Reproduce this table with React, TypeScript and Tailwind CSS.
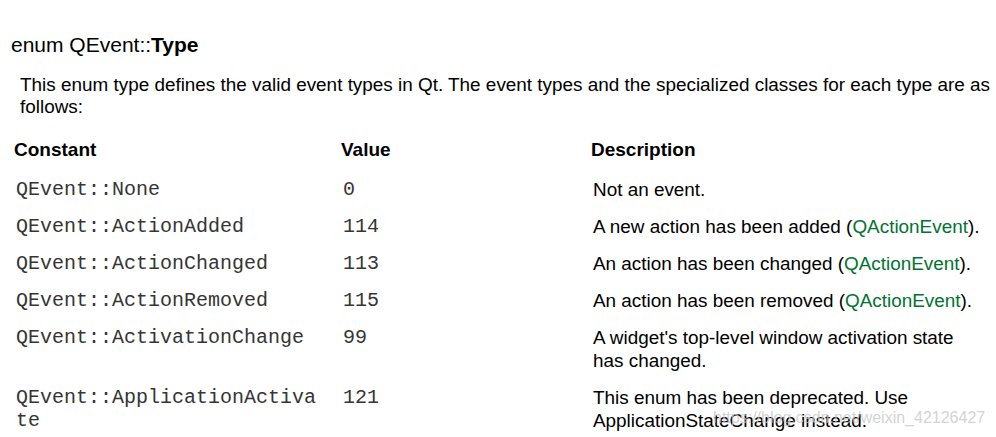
const rows: { name: string; value: string; desc: React.ReactNode }[] = [
  { name: "QEvent::None", value: "0", desc: "Not an event." },
  {
    name: "QEvent::ActionAdded",
    value: "114",
    desc: (
      <>
        A new action has been added (<Link>QActionEvent</Link>).
      </>
    ),
  },
  {
    name: "QEvent::ActionChanged",
    value: "113",
    desc: (
      <>
        An action has been changed (<Link>QActionEvent</Link>).
      </>
    ),
  },
  {
    name: "QEvent::ActionRemoved",
    value: "115",
    desc: (
      <>
        An action has been removed (<Link>QActionEvent</Link>).
      </>
    ),
  },
  {
    name: "QEvent::ActivationChange",
    value: "99",
    desc: "A widget's top-level window activation state has changed.",
  },
  {
    name: "QEvent::ApplicationActivate",
    value: "121",
    desc: "This enum has been deprecated. Use ApplicationStateChange instead.",
  },
];

function Link({ children }: { children: React.ReactNode }) {
  return <span className="text-[#00732f]">{children}</span>;
}

export default function App() {
  return (
    <div
      className="relative w-[996px] h-[437px] overflow-hidden bg-white text-black"
      style={{ fontFamily: "Arial, 'Liberation Sans', sans-serif" }}
    >
      <h3 className="pl-[11px] pt-[32px] text-[21px] leading-[26px] font-normal">
        enum QEvent::<b className="font-bold">Type</b>
      </h3>

      <p className="pl-[20px] mt-[16px] text-[18.9px] leading-[22px]">
        This enum type defines the valid event types in Qt. The event types and the specialized
        classes for each type are as follows:
      </p>

      {/* table */}
      <div className="mt-[20px] pl-[14px] grid grid-cols-[327px_250px_394px] text-[18.9px] leading-[23px]">
        <div className="font-bold text-[19px] pb-[10px]">Constant</div>
        <div className="font-bold text-[19px] pb-[10px]">Value</div>
        <div className="font-bold text-[19px] pb-[10px]">Description</div>

        {rows.map((r) => (
          <div key={r.name} className="contents">
            <div
              className="py-[7px] pl-[2px] pr-[20px] text-[20px] text-[#363534] break-all"
              style={{ fontFamily: "'Liberation Mono', 'Courier New', monospace" }}
            >
              {r.name}
            </div>
            <div
              className="py-[7px] pl-[2px] text-[20px] text-[#363534]"
              style={{ fontFamily: "'Liberation Mono', 'Courier New', monospace" }}
            >
              {r.value}
            </div>
            <div className="py-[7px] pl-[2px] pr-[2px]">{r.desc}</div>
          </div>
        ))}
      </div>

      {/* csdn watermark */}
      <div className="absolute left-[713px] top-[408px] text-[16px] leading-[20px] text-[#c8c8c8]/80 pointer-events-none">
        https://blog.csdn.net/weixin_42126427
      </div>
    </div>
  );
}
